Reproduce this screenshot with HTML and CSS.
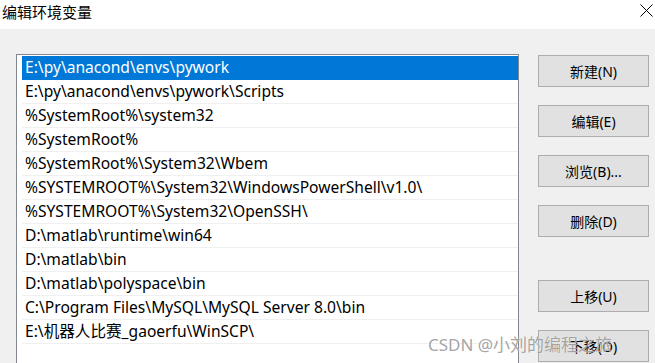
FILE: index.html
```html
<!DOCTYPE html>
<html lang="zh-CN">
<head>
    <meta charset="UTF-8">
    <title>编辑环境变量</title>
    <link rel="stylesheet" href="styles.css">
</head>
<body>
    <div class="window">
        <div class="titlebar">
            <span class="title">编辑环境变量</span>
            <svg class="close" width="13" height="13" viewBox="0 0 13 13">
                <path d="M0.5 0.5 L12.5 12.5 M12.5 0.5 L0.5 12.5" stroke="#000" stroke-width="1" fill="none"/>
            </svg>
        </div>
        <div class="content">
            <div class="path-list">
                <div class="row selected">E:\py\anacond\envs\pywork</div>
                <div class="row">E:\py\anacond\envs\pywork\Scripts</div>
                <div class="row">%SystemRoot%\system32</div>
                <div class="row">%SystemRoot%</div>
                <div class="row">%SystemRoot%\System32\Wbem</div>
                <div class="row">%SYSTEMROOT%\System32\WindowsPowerShell\v1.0\</div>
                <div class="row">%SYSTEMROOT%\System32\OpenSSH\</div>
                <div class="row">D:\matlab\runtime\win64</div>
                <div class="row">D:\matlab\bin</div>
                <div class="row">D:\matlab\polyspace\bin</div>
                <div class="row">C:\Program Files\MySQL\MySQL Server 8.0\bin</div>
                <div class="row">E:\机器人比赛_gaoerfu\WinSCP\</div>
            </div>
            <div class="buttons">
                <button>新建(N)</button>
                <button>编辑(E)</button>
                <button>浏览(B)...</button>
                <button class="group-end">删除(D)</button>
                <button>上移(U)</button>
                <button>下移(O)</button>
            </div>
        </div>
        <div class="watermark">CSDN @小刘的编程之旅</div>
    </div>
</body>
</html>
```

FILE: styles.css
```css
body {
    margin: 0;
    font-family: "Noto Sans", "Noto Sans CJK SC", sans-serif;
    font-size: 15px;
    color: #000;
    overflow: hidden;
}
.window {
    position: relative;
    width: 655px;
    height: 363px;
    overflow: hidden;
    background-color: #f0f0f0;
}
.titlebar {
    height: 29px;
    background-color: white;
    display: flex;
    justify-content: space-between;
    align-items: flex-start;
}
.title {
    padding-left: 2px;
    line-height: 24px;
    font-family: "Noto Sans CJK SC", sans-serif;
}
.close {
    margin: 4px 2px 0 0;
}
.content {
    display: flex;
    align-items: flex-start;
    padding: 25px 0 0 16px;
    gap: 19px;
}
.path-list {
    width: 496px;
    height: 320px;
    padding: 1px 0 0 5px;
    background-color: white;
    border: 1px solid #828790;
    font-size: 15.6px;
}
.row {
    height: 23px;
    line-height: 23px;
    padding-left: 3px;
    border-bottom: 1px solid #f0f0f0;
    white-space: nowrap;
    overflow: hidden;
}
.row.selected {
    background-color: #0078d7;
    color: white;
    border-bottom-color: #0078d7;
}
.buttons {
    display: flex;
    flex-direction: column;
    width: 111px;
    margin-top: 1px;
}
.buttons button {
    height: 32px;
    margin-bottom: 18px;
    background-color: #e1e1e1;
    border: 1px solid #adadad;
    font-family: "Noto Sans", "Noto Sans CJK SC", sans-serif;
    font-size: 14px;
    color: #000;
    padding: 0;
}
.buttons .group-end {
    margin-bottom: 43px;
}
.watermark {
    position: absolute;
    left: 428px;
    top: 331px;
    font-family: "Noto Sans", "Noto Sans CJK SC", sans-serif;
    font-size: 17px;
    color: rgba(140, 140, 140, 0.8);
    text-shadow: 0 0 1px white;
}
```
